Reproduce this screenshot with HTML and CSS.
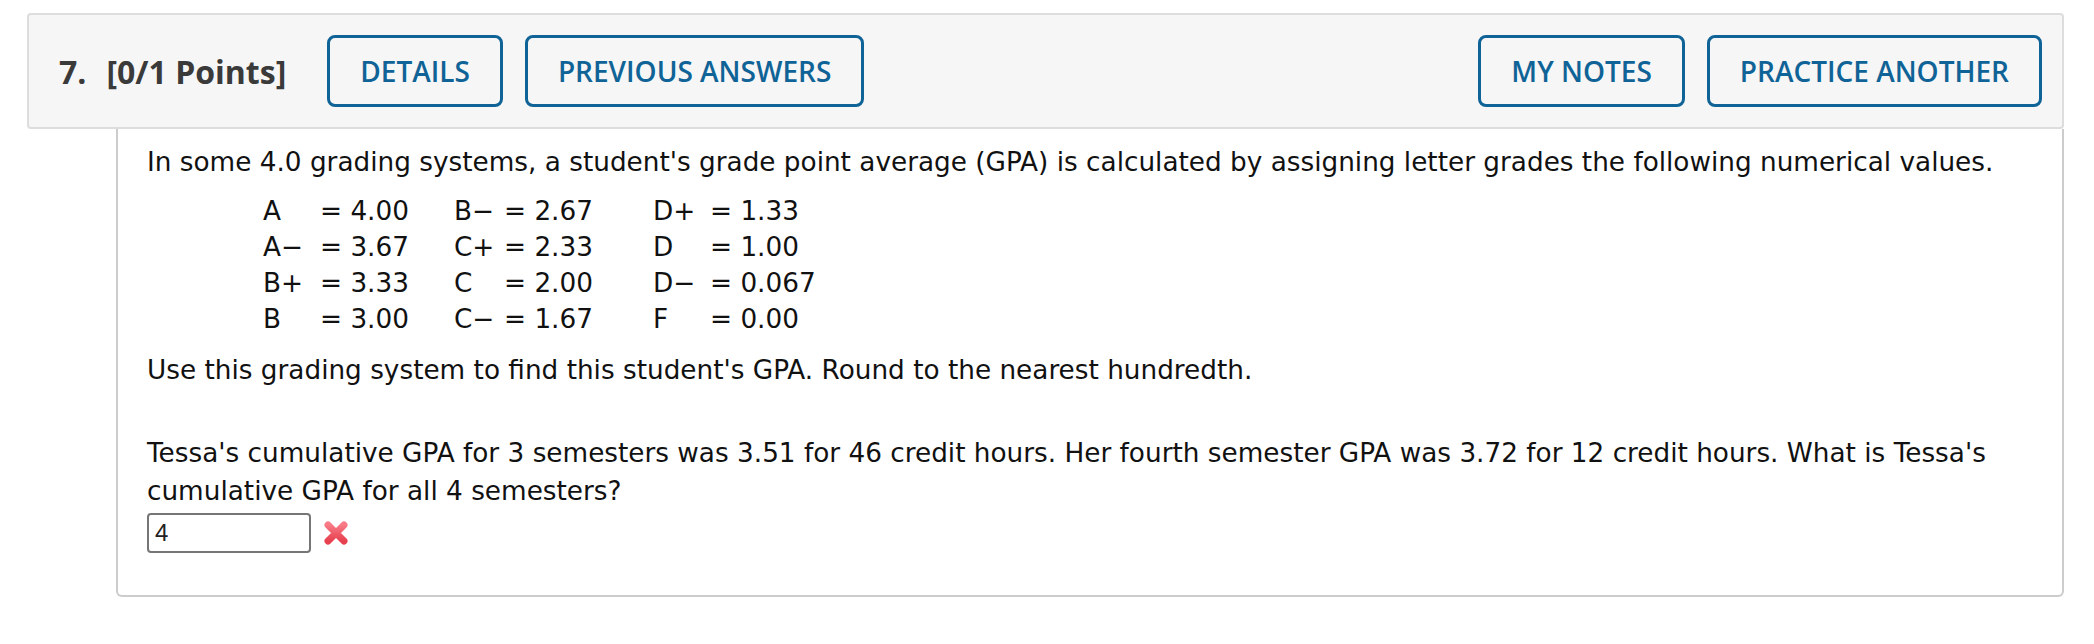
FILE: index.html
```html
<!DOCTYPE html>
<html lang="en">
<head>
<meta charset="utf-8">
<title>Question 7</title>
<link rel="stylesheet" href="styles.css">
</head>
<body>
<div class="question">
  <div class="q-header">
    <div class="q-title"><span class="q-num">7.</span><span class="q-points">[0/1 Points]</span></div>
    <div class="btn-group">
      <button class="q-btn">DETAILS</button>
      <button class="q-btn">PREVIOUS ANSWERS</button>
    </div>
    <div class="btn-group right">
      <button class="q-btn">MY NOTES</button>
      <button class="q-btn">PRACTICE ANOTHER</button>
    </div>
  </div>
  <div class="q-body">
    <p class="intro">In some 4.0 grading systems, a student's grade point average (GPA) is calculated by assigning letter grades the following numerical values.</p>
    <div class="grades">
      <span>A</span><span>= 4.00</span><span>B&minus;</span><span>= 2.67</span><span>D+</span><span>= 1.33</span>
      <span>A&minus;</span><span>= 3.67</span><span>C+</span><span>= 2.33</span><span>D</span><span>= 1.00</span>
      <span>B+</span><span>= 3.33</span><span>C</span><span>= 2.00</span><span>D&minus;</span><span>= 0.067</span>
      <span>B</span><span>= 3.00</span><span>C&minus;</span><span>= 1.67</span><span>F</span><span>= 0.00</span>
    </div>
    <p class="instr">Use this grading system to find this student's GPA. Round to the nearest hundredth.</p>
    <p class="problem">Tessa's cumulative GPA for 3 semesters was 3.51 for 46 credit hours. Her fourth semester GPA was 3.72 for 12 credit hours. What is Tessa's cumulative GPA for all 4 semesters?</p>
    <div class="answer-row">
      <input class="answer" type="text" value="4">
      <svg class="wrong" width="26" height="26" viewBox="0 0 26 26" aria-label="incorrect">
        <defs>
          <linearGradient id="xg" x1="0" y1="0" x2="0" y2="1">
            <stop offset="0" stop-color="#f77a86"/>
            <stop offset="1" stop-color="#e7404e"/>
          </linearGradient>
        </defs>
        <path d="M5 5 L21 21 M21 5 L5 21" stroke="url(#xg)" stroke-width="7" stroke-linecap="round" fill="none"/>
      </svg>
    </div>
  </div>
</div>
</body>
</html>
```
FILE: styles.css
```css
html, body {
  margin: 0;
  padding: 0;
  background: #ffffff;
}

.question {
  padding-top: 13px;
}

.q-header {
  display: flex;
  align-items: center;
  margin: 0 30px 0 27px;
  padding: 20px 20px 20px 30px;
  background: #f6f6f6;
  border: 2px solid #dddddd;
  border-radius: 4px;
  font-family: "Open Sans", "Liberation Sans", sans-serif;
}

.q-title {
  display: flex;
  align-items: baseline;
  font-size: 32px;
  font-weight: 700;
  color: #3a3a3a;
  margin-right: 41px;
}

.q-num {
  margin-right: 20px;
}

.btn-group {
  display: flex;
  gap: 22px;
}

.btn-group.right {
  margin-left: auto;
}

.q-btn {
  box-sizing: border-box;
  height: 72px;
  padding: 0 30px;
  background: transparent;
  border: 3px solid #0f6396;
  border-radius: 8px;
  color: #0f6396;
  font-family: "Open Sans", "Liberation Sans", sans-serif;
  font-size: 28px;
  font-weight: 600;
  line-height: 66px;
  white-space: nowrap;
}

.q-body {
  margin: 0 30px 0 116px;
  padding: 14px 29px 42px 29px;
  border: 2px solid #cccccc;
  border-top: none;
  border-radius: 0 0 6px 6px;
  font-family: "DejaVu Sans", Verdana, sans-serif;
  font-size: 26.3px;
  line-height: 38px;
  color: #111111;
}

.q-body p {
  margin: 0;
}

.grades {
  display: grid;
  grid-template-columns: 57px 134px 50px 149px 57px auto;
  margin: 12px 0 0 116px;
  line-height: 36px;
  width: max-content;
  white-space: pre;
}

.instr {
  margin-top: 14px !important;
}

.problem {
  margin-top: 45px !important;
}

.answer-row {
  display: flex;
  align-items: center;
  gap: 12px;
  margin-top: 3px;
}

.answer {
  box-sizing: border-box;
  width: 164px;
  height: 40px;
  margin: 0;
  padding: 0 6px;
  border: 2px solid #767676;
  border-radius: 4px;
  font-family: "Liberation Sans", Arial, sans-serif;
  font-size: 24px;
  color: #222;
  background: #fff;
}

.wrong {
  display: block;
}
```
